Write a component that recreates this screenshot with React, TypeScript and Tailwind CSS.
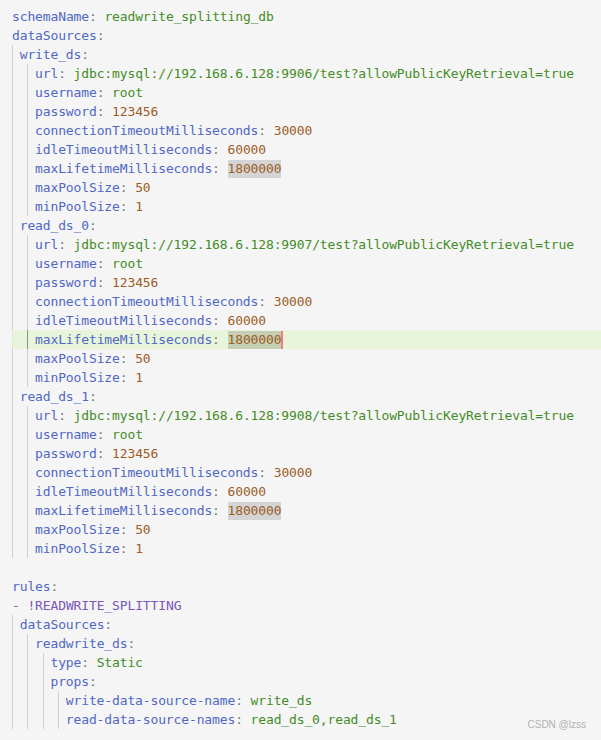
import React from "react";

type Tok = { t: string; c: "k" | "s" | "n" | "p" | "tag" | "hl" | "hlg" };
type Line = { indent: number; guides: number[]; toks: Tok[]; active?: boolean };

const K = (t: string): Tok => ({ t, c: "k" });
const S = (t: string): Tok => ({ t, c: "s" });
const N = (t: string): Tok => ({ t, c: "n" });
const P = (t: string): Tok => ({ t, c: "p" });

const kv = (indent: number, guides: number[], key: string, val?: Tok): Line => ({
  indent,
  guides,
  toks: val ? [K(key), P(": "), val] : [K(key), P(":")],
});

const ds = (name: string, port: string, activeHl: boolean): Line[] => [
  kv(1, [0], name),
  kv(3, [0, 2], "url", S(`jdbc:mysql://192.168.6.128:${port}/test?allowPublicKeyRetrieval=true`)),
  kv(3, [0, 2], "username", S("root")),
  kv(3, [0, 2], "password", N("123456")),
  kv(3, [0, 2], "connectionTimeoutMilliseconds", N("30000")),
  kv(3, [0, 2], "idleTimeoutMilliseconds", N("60000")),
  {
    ...kv(3, [0, 2], "maxLifetimeMilliseconds", { t: "1800000", c: activeHl ? "hlg" : "hl" }),
    active: activeHl,
  },
  kv(3, [0, 2], "maxPoolSize", N("50")),
  kv(3, [0, 2], "minPoolSize", N("1")),
];

const lines: Line[] = [
  kv(0, [], "schemaName", S("readwrite_splitting_db")),
  kv(0, [], "dataSources"),
  ...ds("write_ds", "9906", false),
  ...ds("read_ds_0", "9907", true),
  ...ds("read_ds_1", "9908", false),
  { indent: 0, guides: [], toks: [] },
  kv(0, [], "rules"),
  { indent: 0, guides: [], toks: [P("- "), { t: "!READWRITE_SPLITTING", c: "tag" }] },
  kv(1, [0], "dataSources"),
  kv(3, [0, 2], "readwrite_ds"),
  kv(5, [0, 2, 4], "type", S("Static")),
  kv(5, [0, 2, 4], "props"),
  kv(7, [0, 2, 4, 6], "write-data-source-name", S("write_ds")),
  kv(7, [0, 2, 4, 6], "read-data-source-names", S("read_ds_0,read_ds_1")),
];

const cls: Record<Tok["c"], string> = {
  k: "text-[#5068c4]",
  s: "text-[#448c27]",
  n: "text-[#9c5d27]",
  p: "text-[#777777]",
  tag: "text-[#7a57b8]",
  hl: "text-[#9c5d27] bg-[#d4d4d4]",
  hlg: "text-[#9c5d27] bg-[#c5cfb3] border-r-2 border-[#f08080]",
};

function guideClass(ln: Line, j: number) {
  if (!ln.guides.includes(j)) return "";
  if (ln.active) {
    const last = ln.guides[ln.guides.length - 1];
    return j === last ? "border-l border-[#909090]" : "border-l border-[#e2eed4]";
  }
  return "border-l border-[#d0d0d0]";
}

export default function App() {
  return (
    <div className="relative min-h-[740px] w-[601px] bg-[#f5f5f5] pt-[7px]">
      <div
        className="flex flex-col text-[13px] tracking-[-0.13px] whitespace-pre"
        style={{ fontFamily: '"DejaVu Sans Mono", "Liberation Mono", monospace' }}
      >
        {lines.map((ln, i) => (
          <div
            key={i}
            className={`ml-[12px] flex h-[19px] items-stretch ${ln.active ? "bg-[#e9f5db]" : ""}`}
          >
            {Array.from({ length: ln.indent }).map((_, j) => (
              <span key={j} className={`inline-block w-[7.7px] shrink-0 ${guideClass(ln, j)}`} />
            ))}
            <span className="flex items-center leading-[19px]">
              {ln.toks.map((tk, j) => (
                <span key={j} className={`${cls[tk.c]} leading-[18px]`}>
                  {tk.t}
                </span>
              ))}
            </span>
          </div>
        ))}
      </div>
      <div
        className="absolute right-[15px] bottom-[8px] text-[10px] text-[#b0b0b0]"
        style={{ fontFamily: '"Liberation Sans", Arial, sans-serif' }}
      >
        CSDN @lzss
      </div>
    </div>
  );
}
